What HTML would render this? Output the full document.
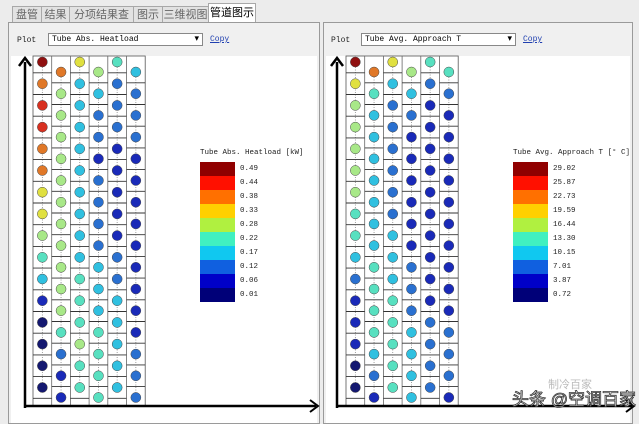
<!DOCTYPE html>
<html><head><meta charset="utf-8"><style>
body{margin:0;width:639px;height:416px;background:#ececec;position:relative;overflow:hidden;font-family:"Liberation Sans","Noto Sans CJK SC",sans-serif}
.tab{position:absolute;top:6px;height:16px;border:1px solid #a8a8a8;border-bottom:none;background:#e2e2e2;font-size:11px;color:#666;text-align:center;line-height:16px;box-sizing:border-box}
.tab.a{top:3px;height:20px;background:#fff;color:#000;line-height:18px}
.panel{position:absolute;top:22px;height:400px;border:1px solid #9a9a9a;background:#f0f0f0}
.plot{position:absolute;top:33px;left:2px;right:2px;bottom:0;background:#fff}
.lbl{position:absolute;font-family:"Liberation Mono",monospace;font-size:8px;color:#222}
.dd{position:absolute;top:10px;width:155px;height:13px;border:1px solid #888;background:#fff;box-sizing:border-box;font-family:"Liberation Mono",monospace;font-size:8px;line-height:11px;padding-left:3px}
.dd:after{content:"▾";position:absolute;right:3px;top:0;font-size:9px}
.copy{position:absolute;top:12px;font-family:"Liberation Mono",monospace;font-size:8px;color:#2040b0;text-decoration:underline}
svg{position:absolute;left:0;top:0}
.wm{position:absolute;left:512px;top:385px;font-size:17px;color:#fff;-webkit-text-stroke:0.8px #333}
.wm2{position:absolute;left:548px;top:376px;font-size:11px;color:#bbb}
</style></head><body>
<div class="tab" style="left:12px;width:30px">盘管</div>
<div class="tab" style="left:41px;width:29px">结果</div>
<div class="tab" style="left:69px;width:65px">分项结果查看</div>
<div class="tab" style="left:133px;width:30px">图示</div>
<div class="tab" style="left:162px;width:47px">三维视图</div>
<div class="tab a" style="left:208px;width:48px">管道图示</div>
<div class="panel" style="left:8px;width:310px"><div class="plot"></div>
<div class="lbl" style="left:8px;top:13px">Plot</div>
<div class="dd" style="left:39px">Tube Abs. Heatload</div>
<div class="copy" style="left:201px">Copy</div></div>
<div class="panel" style="left:323px;width:308px"><div class="plot"></div>
<div class="lbl" style="left:7px;top:13px">Plot</div>
<div class="dd" style="left:37px">Tube Avg. Approach T</div>
<div class="copy" style="left:199px">Copy</div></div>
<svg id="s" width="639" height="416"></svg>
<div class="wm2">制冷百家</div>
<div class="wm">头条 @空调百家</div>
<script>
var C=["#000078","#0000c8","#1060e0","#10c8f0","#40f0c0","#b0f040","#ffd000","#ff7000","#ff1000","#900000"];
var M=["#141870","#1a2ab8","#2a70d0","#30c0e0","#58e0c0","#a8e888","#e0e040","#e07828","#d83020","#901010"];
function col(v){var i=Math.max(0,Math.min(9,Math.floor(v*10)));return M[i];}
var s="";
function grid(x0,ax,vals){
 var w=18.7;
 s+='<rect x="'+x0+'" y="56" width="'+(w*6)+'" height="350" fill="#fff" stroke="#555" stroke-width="0.8"/>';
 for(var c=1;c<6;c++){s+='<line x1="'+(x0+c*w)+'" y1="56" x2="'+(x0+c*w)+'" y2="406" stroke="#666" stroke-width="0.8"/>';}
 for(var c=0;c<6;c++){
  var cx=x0+c*w+w/2, off=(c%2)?72:62;
  s+='<line x1="'+cx+'" y1="'+off+'" x2="'+cx+'" y2="'+(off+15*21.7)+'" stroke="#888" stroke-dasharray="1,1.5" stroke-width="0.8"/>';
  for(var r=0;r<16;r++){
   var cy=off+r*21.7;
   var hy=cy+10.8; if(hy<406) s+='<line x1="'+(x0+c*w)+'" y1="'+hy+'" x2="'+(x0+c*w+w)+'" y2="'+hy+'" stroke="#333" stroke-width="0.9"/>';
   s+='<circle cx="'+cx+'" cy="'+cy+'" r="5" fill="'+col(vals[c][r])+'" stroke="#444" stroke-width="0.5"/>';
  }
 }
 s+='<line x1="'+ax+'" y1="408" x2="'+ax+'" y2="62" stroke="#000" stroke-width="2.5"/><path d="M'+(ax-6)+' 66 L'+ax+' 58 L'+(ax+6)+' 66" fill="none" stroke="#000" stroke-width="2.5"/>';
}
var L=[[0.95,0.75,0.82,0.85,0.75,0.75,0.68,0.62,0.55,0.45,0.3,0.1,0.08,0.06,0.05,0.05],
[0.75,0.5,0.5,0.5,0.5,0.5,0.55,0.55,0.5,0.55,0.55,0.5,0.4,0.25,0.15,0.1],
[0.62,0.38,0.3,0.35,0.3,0.35,0.38,0.38,0.35,0.38,0.4,0.45,0.48,0.5,0.45,0.42],
[0.52,0.35,0.25,0.22,0.15,0.2,0.22,0.22,0.25,0.3,0.35,0.38,0.4,0.42,0.45,0.45],
[0.4,0.25,0.22,0.2,0.18,0.15,0.15,0.15,0.18,0.2,0.25,0.3,0.3,0.3,0.32,0.35],
[0.38,0.25,0.22,0.2,0.18,0.15,0.12,0.12,0.12,0.12,0.12,0.15,0.18,0.2,0.22,0.25]];
var R=[[0.95,0.62,0.55,0.55,0.52,0.52,0.5,0.45,0.42,0.35,0.25,0.15,0.12,0.1,0.08,0.05],
[0.78,0.45,0.35,0.35,0.35,0.35,0.38,0.38,0.38,0.4,0.4,0.45,0.4,0.35,0.25,0.15],
[0.62,0.35,0.25,0.22,0.25,0.25,0.25,0.28,0.3,0.35,0.38,0.4,0.4,0.42,0.42,0.42],
[0.52,0.35,0.2,0.15,0.12,0.12,0.12,0.15,0.15,0.2,0.22,0.25,0.3,0.32,0.35,0.35],
[0.42,0.22,0.15,0.12,0.12,0.12,0.12,0.12,0.12,0.15,0.15,0.18,0.2,0.22,0.25,0.25],
[0.4,0.22,0.15,0.12,0.12,0.12,0.12,0.12,0.12,0.15,0.15,0.18,0.2,0.2,0.2,0.18]];
grid(33,25,L);grid(346,337,R);
s+='<line x1="24" y1="406" x2="316" y2="406" stroke="#000" stroke-width="2.5"/><path d="M310 400 L318 406 L310 412" fill="none" stroke="#000" stroke-width="2"/>';
s+='<line x1="336" y1="406" x2="632" y2="406" stroke="#000" stroke-width="2.5"/><path d="M626 400 L634 406 L626 412" fill="none" stroke="#000" stroke-width="2"/>';
function leg(x,t,labs){
 s+='<text x="'+x+'" y="154" font-family="Liberation Mono" font-size="7.5" fill="#222">'+t+'</text>';
 for(var i=0;i<10;i++){s+='<rect x="'+x+'" y="'+(162+i*14)+'" width="35" height="14" fill="'+C[9-i]+'"/>';
 s+='<text x="'+(x+40)+'" y="'+(170+i*14)+'" font-family="Liberation Mono" font-size="7.5" fill="#222">'+labs[i]+'</text>';}
}
leg(200,"Tube Abs. Heatload [kW]",["0.49","0.44","0.38","0.33","0.28","0.22","0.17","0.12","0.06","0.01"]);
leg(513,"Tube Avg. Approach T [° C]",["29.02","25.87","22.73","19.59","16.44","13.30","10.15","7.01","3.87","0.72"]);
document.getElementById("s").innerHTML=s;
</script>
</body></html>
